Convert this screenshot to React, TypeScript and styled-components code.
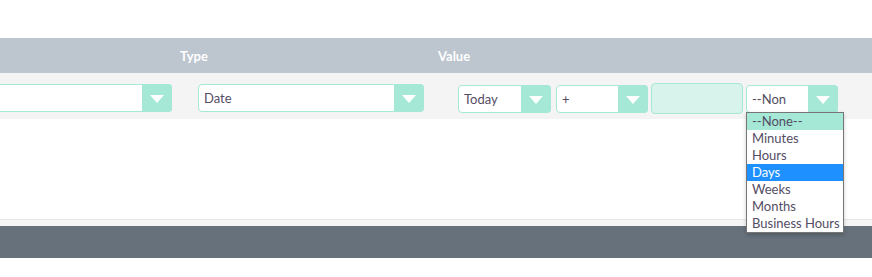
import React from 'react';
import styled, { createGlobalStyle } from 'styled-components';

const GlobalStyle = createGlobalStyle`
  html, body {
    margin: 0;
    padding: 0;
    background: #ffffff;
    font-family: Lato, "Open Sans", sans-serif;
  }
`;

const teal = '#a5e8d6';
const ink = '#534d64';

const Page = styled.div`
  width: 872px;
  height: 277px;
  overflow: hidden;
  display: flex;
  flex-direction: column;
`;

const TopSpace = styled.div`
  height: 38px;
`;

const Columns = styled.div`
  display: grid;
  grid-template-columns: 180px 258px 1fr;
`;

const HeaderRow = styled(Columns)`
  height: 35px;
  background: #bdc6cf;
  align-items: center;
`;

const HeaderCell = styled.div`
  color: #ffffff;
  font-weight: 700;
  font-size: 13px;
  padding-top: 1px;
`;

const FieldRow = styled(Columns)`
  height: 46px;
  background: #f4f4f4;
  box-sizing: border-box;
  padding-top: 10px;
  align-items: start;
`;

const Cell = styled.div<{ $indent?: number }>`
  display: flex;
  align-items: center;
  gap: 3px;
  padding-left: ${p => p.$indent ?? 0}px;
`;

const SelectBox = styled.div<{ $width: number; $clipped?: boolean; $lead?: number }>`
  position: relative;
  display: flex;
  width: ${p => p.$width}px;
  height: 28px;
  box-sizing: border-box;
  margin-top: 1px;
  margin-left: ${p => p.$lead ?? 0}px;
  border: 1px solid ${teal};
  border-left-width: ${p => (p.$clipped ? 0 : 1)}px;
  border-radius: ${p => (p.$clipped ? '0 4px 4px 0' : '4px')};
  background: #ffffff;
`;

const SelectText = styled.div`
  flex: 1;
  margin-left: 5px;
  font-size: 13px;
  line-height: 26px;
  color: ${ink};
  white-space: nowrap;
  overflow: hidden;
`;

const ArrowButton = styled.div`
  width: 30px;
  margin: -1px -1px -1px auto;
  background: ${teal};
  border-radius: 0 4px 4px 0;
  display: flex;
  align-items: center;
  justify-content: center;

  &::after {
    content: '';
    border-left: 7px solid transparent;
    border-right: 7px solid transparent;
    border-top: 8px solid #ffffff;
    margin-top: 1px;
  }
`;

const TextInput = styled.div`
  width: 92px;
  height: 31px;
  box-sizing: border-box;
  border: 1px solid ${teal};
  border-radius: 4px;
  background: #d8f3ec;
`;

const Dropdown = styled.ul`
  position: absolute;
  top: 26px;
  left: -1px;
  width: 98px;
  box-sizing: border-box;
  margin: 0;
  padding: 0;
  list-style: none;
  background: #ffffff;
  border: 1px solid #767676;
  box-shadow: 0 2px 4px rgba(0, 0, 0, 0.2);
  z-index: 2;
`;

const Option = styled.li<{ $state?: 'current' | 'hover' }>`
  height: 17px;
  line-height: 17px;
  padding-left: 5px;
  font-size: 13px;
  white-space: nowrap;
  color: ${p => (p.$state === 'hover' ? '#ffffff' : ink)};
  background: ${p =>
    p.$state === 'current' ? teal : p.$state === 'hover' ? '#1e90ff' : 'transparent'};
`;

const Blank = styled.div`
  height: 100px;
`;

const FooterEdge = styled.div`
  height: 6px;
  border-top: 1px solid #e6e6e6;
  background: #f5f5f5;
`;

const DarkBar = styled.div`
  height: 32px;
  background: #66717b;
`;

const units = ['--None--', 'Minutes', 'Hours', 'Days', 'Weeks', 'Months', 'Business Hours'];

const Select: React.FC<{
  width: number;
  value?: string;
  clipped?: boolean;
  lead?: number;
  children?: React.ReactNode;
}> = ({ width, value, clipped, lead, children }) => (
  <SelectBox $width={width} $clipped={clipped} $lead={lead}>
    <SelectText>{value}</SelectText>
    <ArrowButton />
    {children}
  </SelectBox>
);

export default function App() {
  return (
    <Page>
      <GlobalStyle />
      <TopSpace />
      <HeaderRow>
        <HeaderCell />
        <HeaderCell>Type</HeaderCell>
        <HeaderCell>Value</HeaderCell>
      </HeaderRow>
      <FieldRow>
        <Cell>
          <Select width={172} clipped />
        </Cell>
        <Cell $indent={18}>
          <Select width={226} value="Date" />
        </Cell>
        <Cell $indent={20}>
          <Select width={93} value="Today" />
          <Select width={92} value="+" lead={2} />
          <TextInput />
          <Select width={92} value="--Non">
            <Dropdown>
              {units.map(u => (
                <Option key={u} $state={u === '--None--' ? 'current' : u === 'Days' ? 'hover' : undefined}>
                  {u}
                </Option>
              ))}
            </Dropdown>
          </Select>
        </Cell>
      </FieldRow>
      <Blank />
      <FooterEdge />
      <DarkBar />
    </Page>
  );
}
